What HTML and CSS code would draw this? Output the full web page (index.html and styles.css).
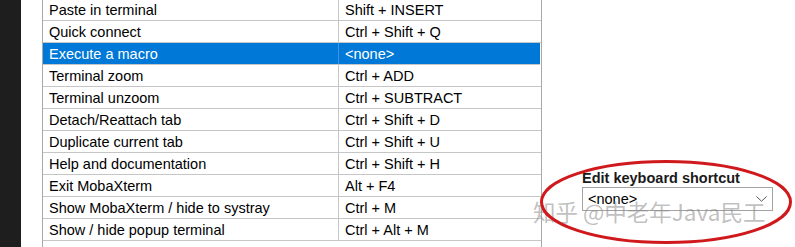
FILE: index.html
```html
<!DOCTYPE html>
<html>
<head>
<meta charset="utf-8">
<link rel="stylesheet" href="styles.css">
</head>
<body>
<div class="app">
  <div class="sidebar"></div>
  <div class="content">
    <div class="list">
      <div class="row"><div class="c1">Paste in terminal</div><div class="c2">Shift + INSERT</div></div>
      <div class="row"><div class="c1">Quick connect</div><div class="c2">Ctrl + Shift + Q</div></div>
      <div class="row sel"><div class="c1">Execute a macro</div><div class="c2">&lt;none&gt;</div></div>
      <div class="row"><div class="c1">Terminal zoom</div><div class="c2">Ctrl + ADD</div></div>
      <div class="row"><div class="c1">Terminal unzoom</div><div class="c2">Ctrl + SUBTRACT</div></div>
      <div class="row"><div class="c1">Detach/Reattach tab</div><div class="c2">Ctrl + Shift + D</div></div>
      <div class="row"><div class="c1">Duplicate current tab</div><div class="c2">Ctrl + Shift + U</div></div>
      <div class="row"><div class="c1">Help and documentation</div><div class="c2">Ctrl + Shift + H</div></div>
      <div class="row"><div class="c1">Exit MobaXterm</div><div class="c2">Alt + F4</div></div>
      <div class="row"><div class="c1">Show MobaXterm / hide to systray</div><div class="c2">Ctrl + M</div></div>
      <div class="row"><div class="c1">Show / hide popup terminal</div><div class="c2">Ctrl + Alt + M</div></div>
    </div>
    <div class="editor">
      <div class="label">Edit keyboard shortcut</div>
      <div class="select">
        <span class="value">&lt;none&gt;</span>
        <svg class="chev" width="11" height="6" viewBox="0 0 11 6"><path d="M0.5 0.5 L5.5 5.2 L10.5 0.5" fill="none" stroke="#555" stroke-width="1"/></svg>
      </div>
    </div>
  </div>
  <div class="watermark">知乎 @中老年Java民工</div>
  <svg class="ring" width="256" height="86" viewBox="0 0 256 86"><ellipse cx="127" cy="43" rx="124.5" ry="40.5" fill="none" stroke="#d0191c" stroke-width="3"/></svg>
</div>
</body>
</html>
```
FILE: styles.css
```css
html, body {
  margin: 0;
  padding: 0;
  background: #fff;
}
.app {
  position: relative;
  width: 795px;
  height: 247px;
  overflow: hidden;
  display: flex;
  font-family: "Liberation Sans", Arial, sans-serif;
  font-size: 14.5px;
  color: #000;
}
.sidebar {
  width: 21px;
  flex: none;
  background: #1e1e1e;
}
.content {
  flex: 1;
  display: flex;
  padding-left: 21px;
}
.list {
  width: 498px;
  flex: none;
  border-left: 1px solid #a8a8a8;
  border-right: 1px solid #a8a8a8;
  margin-top: -1px;
}
.row {
  display: flex;
  height: 21px;
  border-bottom: 1px solid #c6c6c6;
  line-height: 23px;
}
.c1 {
  width: 289px;
  padding-left: 6px;
  border-right: 1px solid #c6c6c6;
  white-space: nowrap;
}
.c2 {
  flex: 1;
  padding-left: 6px;
  white-space: nowrap;
}
.row.sel {
  background: #0078d7;
  color: #fff;
  margin-right: 1px;
}
.row.sel .c1 {
  border-right-color: #3b95e0;
}
.editor {
  margin-left: 40px;
  padding-top: 170px;
}
.label {
  font-weight: bold;
  line-height: 16px;
  color: #1a1a1a;
}
.select {
  margin-top: 1px;
  border: 1px solid #a3a3a3;
  display: flex;
  align-items: center;
  justify-content: space-between;
  padding: 0 5px 0 5px;
  box-sizing: border-box;
  width: 191px;
  height: 24px;
}
.value {
  line-height: 20px;
}
.chev {
  display: block;
}
.watermark {
  position: absolute;
  left: 533px;
  top: 196px;
  font-family: "Noto Sans CJK SC", sans-serif;
  font-size: 22.5px;
  line-height: 30px;
  color: rgba(140, 140, 140, 0.55);
  white-space: nowrap;
}
.ring {
  position: absolute;
  left: 539px;
  top: 159px;
}
```
